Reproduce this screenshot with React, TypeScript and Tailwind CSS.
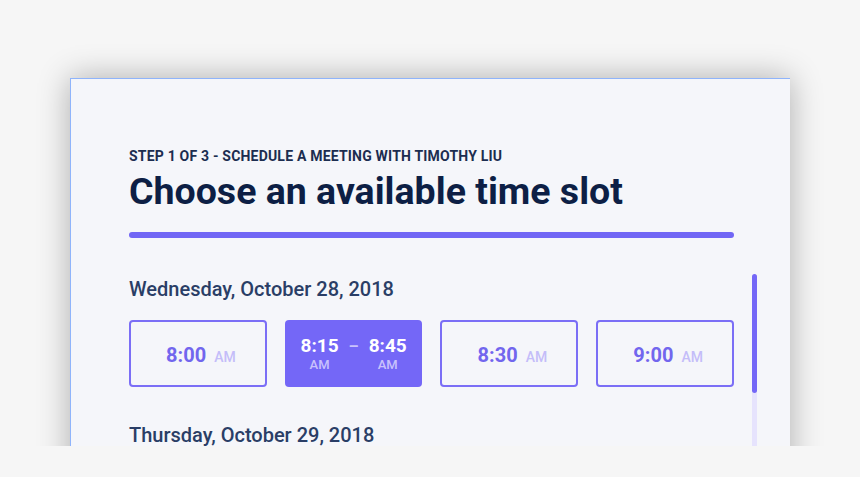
const slots = [
  { id: '800', time: '8:00' },
  { id: '815', time: '8:15', end: '8:45', selected: true },
  { id: '830', time: '8:30' },
  { id: '900', time: '9:00' },
];

function Slot({ time, end, selected }: { time: string; end?: string; selected?: boolean }) {
  if (selected) {
    return (
      <button className="flex h-[67px] w-[138px] items-center justify-center gap-[10px] rounded-[4px] bg-[#7467f7]">
        <div className="flex flex-col items-center">
          <span className="text-[19px] font-bold leading-[22px] text-white">{time}</span>
          <span className="text-[13px] font-medium leading-[16px] text-[#c9c2fc]">AM</span>
        </div>
        <span className="mb-[14px] text-[16px] font-bold text-[#c9c2fc]">–</span>
        <div className="flex flex-col items-center">
          <span className="text-[19px] font-bold leading-[22px] text-white">{end}</span>
          <span className="text-[13px] font-medium leading-[16px] text-[#c9c2fc]">AM</span>
        </div>
      </button>
    );
  }
  return (
    <button className="flex h-[67px] w-[138px] items-baseline justify-center gap-[8px] rounded-[4px] border-2 border-[#7b6ef6] pl-[6px] pt-[22px]">
      <span className="text-[20px] font-bold leading-[22px] text-[#7266ee]">{time}</span>
      <span className="text-[14px] font-medium leading-[16px] text-[#c4bdf9]">AM</span>
    </button>
  );
}

export default function App() {
  return (
    <div className="font-['Roboto',sans-serif] bg-[#f6f6f6] h-[477px] w-[860px] overflow-hidden">
      {/* clipped screenshot area */}
      <div className="h-[446px] overflow-hidden pl-[70px] pt-[78px]">
        <div className="h-[500px] w-[720px] border-l border-t border-[#8fb4fb] bg-[#f5f6fa] pl-[58px] pt-[69px] shadow-[0_0_30px_rgba(0,0,0,0.3)]">
          <p className="text-[14px] font-bold leading-[16px] tracking-[0.2px] text-[#1c2d50] uppercase">
            Step 1 of 3 - Schedule a meeting with Timothy Liu
          </p>
          <h1 className="mt-[5px] text-[37.5px] font-bold leading-[44px] text-[#0d1f45]">Choose an available time slot</h1>
          <div className="mt-[19px] h-[6px] w-[605px] rounded-full bg-[#7166f5]" />

          <div className="mt-[36px] flex gap-[18px]">
            <div className="w-[605px] pt-[1px]">
              <h2 className="text-[20px] font-medium leading-[28px] text-[#2a3e66]">Wednesday, October 28, 2018</h2>
              <div className="mt-[17px] flex gap-[18px]">
                {slots.map((s) => (
                  <Slot key={s.id} time={s.time} end={s.end} selected={s.selected} />
                ))}
              </div>
              <h2 className="mt-[34px] text-[20px] font-medium leading-[28px] text-[#2a3e66]">Thursday, October 29, 2018</h2>
            </div>
            <div className="flex h-[200px] w-[5px] flex-col">
              <div className="h-[119px] rounded-full bg-[#7467f7]" />
              <div className="flex-1 bg-[#e6e3fd]" />
            </div>
          </div>
        </div>
      </div>
    </div>
  );
}
